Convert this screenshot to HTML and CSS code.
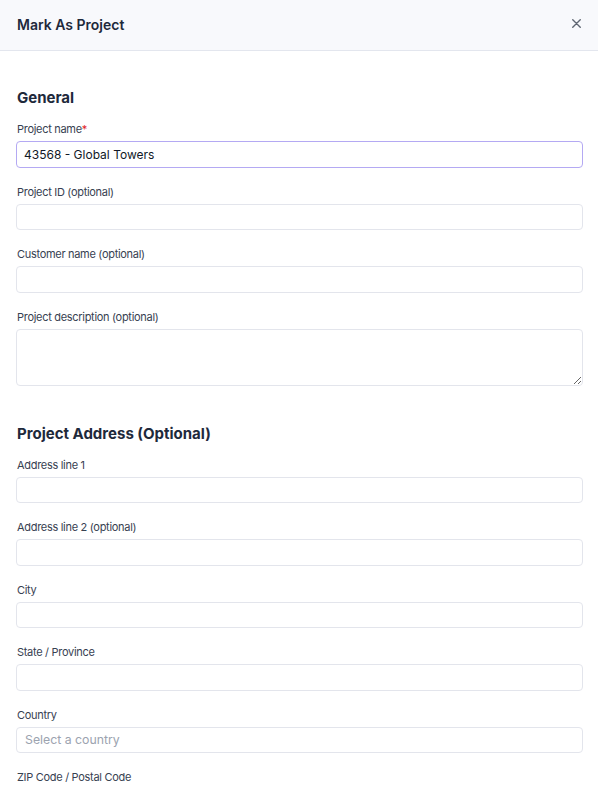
FILE: index.html
```html
<!DOCTYPE html>
<html lang="en">
<head>
<meta charset="utf-8">
<title>Mark As Project</title>
<link rel="stylesheet" href="styles.css">
</head>
<body>
<div class="modal">
  <header class="modal-header">
    <h1 class="modal-title">Mark As Project</h1>
    <button class="close-btn" aria-label="Close">
      <svg width="9" height="9" viewBox="0 0 9 9"><path d="M0.75 0.75L8.25 8.25M8.25 0.75L0.75 8.25" stroke="#5f6672" stroke-width="1.4" stroke-linecap="round"/></svg>
    </button>
  </header>
  <div class="modal-body">
    <section class="section">
      <h2 class="section-title">General</h2>
      <div class="field">
        <label class="label">Project name<span class="req">*</span></label>
        <input class="input input-focus" type="text" value="43568 - Global Towers">
      </div>
      <div class="field">
        <label class="label">Project ID (optional)</label>
        <input class="input" type="text">
      </div>
      <div class="field">
        <label class="label">Customer name (optional)</label>
        <input class="input" type="text">
      </div>
      <div class="field">
        <label class="label">Project description (optional)</label>
        <textarea class="input textarea"></textarea>
      </div>
    </section>
    <section class="section">
      <h2 class="section-title">Project Address (Optional)</h2>
      <div class="field">
        <label class="label">Address line 1</label>
        <input class="input" type="text">
      </div>
      <div class="field">
        <label class="label">Address line 2 (optional)</label>
        <input class="input" type="text">
      </div>
      <div class="field">
        <label class="label">City</label>
        <input class="input" type="text">
      </div>
      <div class="field">
        <label class="label">State / Province</label>
        <input class="input" type="text">
      </div>
      <div class="field">
        <label class="label">Country</label>
        <input class="input placeholder-input" type="text" placeholder="Select a country">
      </div>
      <div class="field">
        <label class="label">ZIP Code / Postal Code</label>
        <input class="input" type="text">
      </div>
    </section>
  </div>
</div>
</body>
</html>
```
FILE: styles.css
```css
* { box-sizing: border-box; }
html, body {
  margin: 0;
  padding: 0;
  background: #ffffff;
  font-family: Inter, "Noto Sans", "Liberation Sans", sans-serif;
  color: #1e2838;
}
.modal { width: 598px; }
.modal-header {
  height: 51px;
  background: #f8f9fc;
  border-bottom: 1px solid #e3e6ee;
  display: flex;
  align-items: center;
  justify-content: space-between;
  padding: 0 17px 0 17px;
}
.modal-title {
  margin: 0;
  font-size: 14px;
  font-weight: 600;
  color: #1e293b;
  line-height: 20px;
}
.close-btn {
  border: 0;
  background: none;
  padding: 0;
  width: 10px;
  height: 10px;
  display: flex;
  align-items: center;
  justify-content: center;
  margin-top: -3px;
}
.modal-body {
  padding: 35px 15px 0 16px;
}
.section + .section { margin-top: 36px; }
.section-title {
  margin: 0 0 12px 1px;
  font-size: 15px;
  line-height: 24px;
  font-weight: 700;
  color: #1e293b;
}
.field { margin-bottom: 17px; }
.label {
  display: block;
  font-size: 11px;
  letter-spacing: -0.3px;
  line-height: 14px;
  color: #374151;
  margin: 0 0 5px 1px;
}
.req { color: #e02424; }
.input {
  display: block;
  width: 100%;
  height: 26.5px;
  border: 1px solid #e3e5ec;
  border-radius: 4px;
  padding: 0 7px;
  font-family: inherit;
  font-size: 12px;
  color: #111827;
  background: #fff;
  outline: none;
}
.placeholder-input { padding-left: 8px; font-size: 12.3px; }
.input::placeholder { color: #9ca3af; }
.input-focus {
  border: 1.5px solid #b4a9f3;
}
.textarea {
  height: 57px;
  resize: vertical;
  padding: 6px 7px;
}
```
